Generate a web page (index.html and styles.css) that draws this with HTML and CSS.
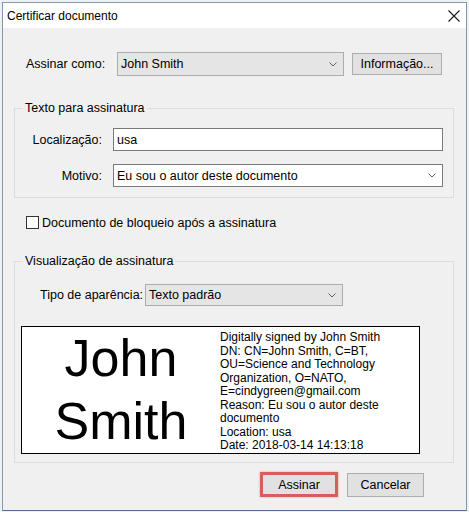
FILE: index.html
```html
<!DOCTYPE html>
<html lang="pt">
<head>
<meta charset="utf-8">
<title>Certificar documento</title>
<link rel="stylesheet" href="styles.css">
</head>
<body>
<div class="window">
  <div class="titlebar">
    <span class="title">Certificar documento</span>
    <svg class="close" width="12" height="12" viewBox="0 0 12 12"><path d="M0.5 0.5 L11.5 11.5 M11.5 0.5 L0.5 11.5" stroke="#1a1a1a" stroke-width="1.1" fill="none"/></svg>
  </div>
  <div class="content">
    <div class="row-sign">
      <span class="lbl-sign">Assinar como:</span>
      <div class="combo combo-sign"><span>John Smith</span><svg class="chev" width="8" height="5" viewBox="0 0 8 5"><path d="M0.5 0.5 L4 4 L7.5 0.5" stroke="#606060" fill="none"/></svg></div>
      <div class="btn btn-info">Informação...</div>
    </div>

    <fieldset class="group group-text">
      <legend>Texto para assinatura</legend>
      <div class="form-grid">
        <span class="lbl-r">Localização:</span>
        <div class="field">usa</div>
        <span class="lbl-r">Motivo:</span>
        <div class="field field-combo"><span>Eu sou o autor deste documento</span><svg class="chev" width="8" height="5" viewBox="0 0 8 5"><path d="M0.5 0.5 L4 4 L7.5 0.5" stroke="#606060" fill="none"/></svg></div>
      </div>
    </fieldset>

    <div class="check-row">
      <span class="checkbox"></span>
      <span>Documento de bloqueio após a assinatura</span>
    </div>

    <fieldset class="group group-preview">
      <legend>Visualização de assinatura</legend>
      <div class="row-type">
        <span class="lbl-type">Tipo de aparência:</span>
        <div class="combo combo-type"><span>Texto padrão</span><svg class="chev" width="8" height="5" viewBox="0 0 8 5"><path d="M0.5 0.5 L4 4 L7.5 0.5" stroke="#606060" fill="none"/></svg></div>
      </div>
      <div class="preview">
        <div class="sig-name">John<br>Smith</div>
        <div class="sig-details">
          Digitally signed by John Smith<br>
          DN: CN=John Smith, C=BT,<br>
          OU=Science and Technology<br>
          Organization, O=NATO,<br>
          E=cindygreen@gmail.com<br>
          Reason: Eu sou o autor deste<br>
          documento<br>
          Location: usa<br>
          Date: 2018-03-14 14:13:18
        </div>
      </div>
    </fieldset>

    <div class="actions">
      <div class="btn btn-sign">Assinar</div>
      <div class="btn btn-cancel">Cancelar</div>
    </div>
  </div>
</div>
</body>
</html>
```
FILE: styles.css
```css
html, body {
  margin: 0;
  padding: 0;
}
body {
  background: #eef1f4;
  font-family: "Liberation Sans", Arial, sans-serif;
  font-size: 12.5px;
  color: #000;
  width: 469px;
  height: 512px;
  overflow: hidden;
}
.window {
  box-sizing: border-box;
  margin: 2px 0 0 2px;
  width: 465px;
  height: 509px;
  border: 1px solid #7e9ab5;
  border-bottom-color: #4f6f8f;
  background: #f0f0f0;
  display: flex;
  flex-direction: column;
}
.titlebar {
  height: 25px;
  background: #fff;
  display: flex;
  align-items: center;
  justify-content: space-between;
  padding: 0 6px 0 4px;
}
.title {
  font-family: "Liberation Sans", Arial, sans-serif;
  font-size: 12px;
  color: #000;
}
.close {
  display: block;
}
.content {
  flex: 1;
  display: flex;
  flex-direction: column;
  background: #f0f0f0;
}
.row-sign {
  display: flex;
  align-items: center;
  margin: 24px 0 0 23px;
  height: 24px;
}
.lbl-sign {
  width: 91px;
}
.combo {
  box-sizing: border-box;
  background: #e5e5e5;
  border: 1px solid #acacac;
  display: flex;
  align-items: center;
  justify-content: space-between;
  padding: 0 6px 0 3px;
}
.chev {
  display: block;
}
.combo-sign {
  width: 227px;
  height: 24px;
}
.btn {
  box-sizing: border-box;
  background: #e1e1e1;
  border: 1px solid #adadad;
  display: flex;
  align-items: center;
  justify-content: center;
}
.btn-info {
  width: 90px;
  height: 22px;
  margin-left: 8px;
}
.group {
  box-sizing: border-box;
  margin: 0 0 0 11px;
  width: 440px;
  border: 1px solid #dcdcdc;
  padding: 0;
  min-width: 0;
}
.group legend {
  padding: 0 2px;
  margin-left: 8px;
  line-height: 14px;
  height: 14px;
}
.group-text {
  margin-top: 25px;
  padding: 13px 10px 10px 0;
}
.form-grid {
  display: grid;
  grid-template-columns: 87px 330px;
  column-gap: 11px;
  row-gap: 13px;
  align-items: center;
}
.lbl-r {
  text-align: right;
}
.field {
  box-sizing: border-box;
  height: 23px;
  background: #fff;
  border: 1px solid #7a7a7a;
  display: flex;
  align-items: center;
  justify-content: space-between;
  padding: 0 6px 0 3px;
}
.check-row {
  display: flex;
  align-items: center;
  height: 13px;
  margin: 18px 0 0 23px;
}
.checkbox {
  box-sizing: border-box;
  width: 13px;
  height: 13px;
  border: 1px solid #333;
  background: #fff;
  margin-right: 3px;
}
.group-preview {
  margin-top: 25px;
  padding: 16px 0 8px 0;
}
.row-type {
  display: flex;
  align-items: center;
  margin-left: 25px;
  height: 22px;
}
.lbl-type {
  width: 105px;
}
.combo-type {
  width: 198px;
  height: 22px;
}
.preview {
  box-sizing: border-box;
  margin: 20px 0 0 6px;
  width: 399px;
  height: 128px;
  border: 1px solid #000;
  background: #fff;
  display: flex;
  overflow: hidden;
}
.sig-name {
  width: 198px;
  text-align: center;
  font-size: 52px;
  line-height: 63px;
}
.sig-details {
  font-size: 12px;
  line-height: 13.5px;
  padding-top: 4px;
}
.actions {
  display: flex;
  justify-content: flex-end;
  align-items: center;
  margin-top: 9px;
  padding-right: 42px;
}
.btn-sign {
  width: 78px;
  height: 25px;
  border: 3px solid #d4605c;
  box-shadow: 0 0 2px rgba(200, 80, 80, 0.5);
  margin-right: 9px;
}
.btn-cancel {
  width: 77px;
  height: 24px;
}
```
